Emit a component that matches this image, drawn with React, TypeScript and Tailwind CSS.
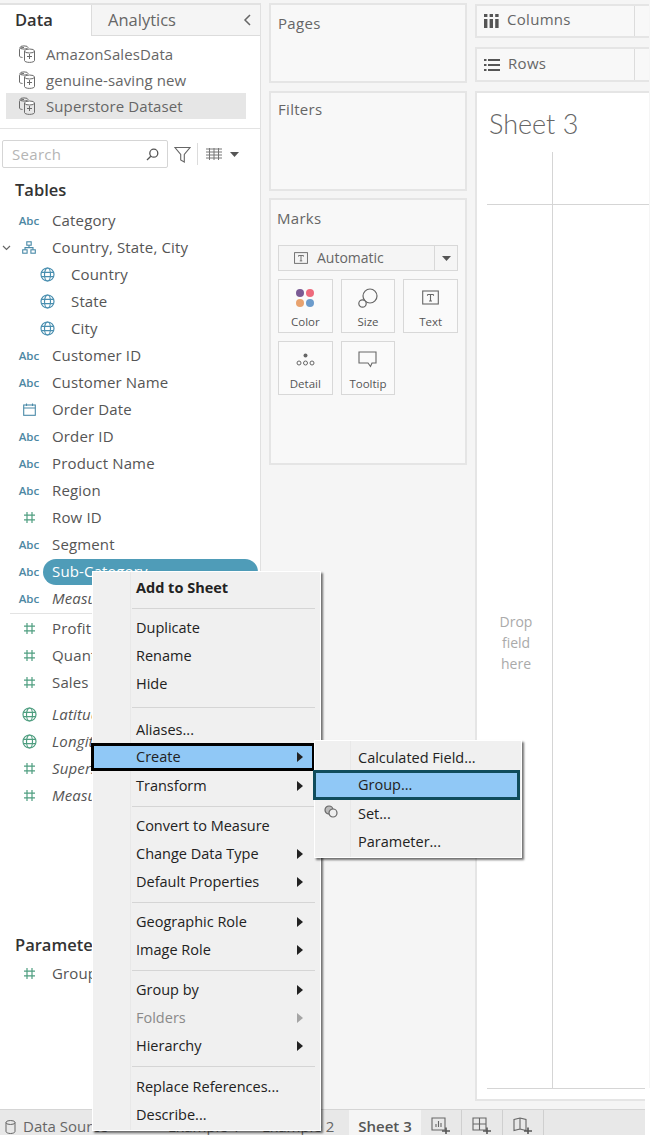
import type { ReactNode } from 'react';

const DataSourceIcon = () => (
  <svg width="18" height="20" viewBox="0 0 18 20" fill="none" stroke="#6b6b6b" strokeWidth="1">
    <path d="M6 3.5C3 3.5 1.5 4.3 1.5 5.2V12c0 .8 1 1.3 3 1.5" />
    <ellipse cx="6" cy="3.5" rx="4" ry="1.6" />
    <ellipse cx="11.5" cy="7" rx="5" ry="2" fill="#fff" />
    <path d="M6.5 7v9.5c0 1 2 1.9 5 1.9s5-.9 5-1.9V7" />
    <path d="M9 12.5h5M11.5 10v5" />
  </svg>
);

const Globe = ({ color = '#4a8fb0' }: { color?: string }) => (
  <svg width="15" height="15" viewBox="0 0 15 15" fill="none" stroke={color} strokeWidth="1.2">
    <circle cx="7.5" cy="7.5" r="6.5" />
    <ellipse cx="7.5" cy="7.5" rx="3" ry="6.5" />
    <path d="M1.2 5.3h12.6M1.2 9.7h12.6" />
  </svg>
);

const Hash = () => (
  <svg width="13" height="13" viewBox="0 0 13 13" stroke="#4f9e80" strokeWidth="1.2">
    <path d="M4 1v11M9 1v11M1 4.2h11M1 8.8h11" />
  </svg>
);

const Abc = () => <span className="text-[11.5px] font-semibold text-[#4d87a3]">Abc</span>;

const CalendarIcon = () => (
  <svg width="13" height="13" viewBox="0 0 13 13" fill="none" stroke="#4a8aa8" strokeWidth="1.1">
    <rect x="0.7" y="2" width="11.6" height="10.3" />
    <path d="M0.7 5h11.6M3.5 0.5v2.5M9.5 0.5v2.5" />
  </svg>
);

const HierarchyIcon = () => (
  <svg width="14" height="13" viewBox="0 0 14 13" fill="none" stroke="#4a8aa8" strokeWidth="1.1">
    <rect x="4.8" y="0.8" width="4.4" height="3.4" />
    <rect x="0.7" y="8.8" width="4.4" height="3.4" />
    <rect x="8.9" y="8.8" width="4.4" height="3.4" />
    <path d="M7 4.2v2.4M3 8.8V6.6h8v2.2" />
  </svg>
);

type Field = { name: string; icon: ReactNode; italic?: boolean };

const dimensions: Field[] = [
  { name: 'Customer ID', icon: <Abc /> },
  { name: 'Customer Name', icon: <Abc /> },
  { name: 'Order Date', icon: <CalendarIcon /> },
  { name: 'Order ID', icon: <Abc /> },
  { name: 'Product Name', icon: <Abc /> },
  { name: 'Region', icon: <Abc /> },
  { name: 'Row ID', icon: <Hash /> },
  { name: 'Segment', icon: <Abc /> },
];

const measures: Field[] = [
  { name: 'Profit', icon: <Hash /> },
  { name: 'Quantity', icon: <Hash /> },
  { name: 'Sales', icon: <Hash /> },
];

const generated: Field[] = [
  { name: 'Latitude (generated)', icon: <Globe color="#4f9e80" />, italic: true },
  { name: 'Longitude (generated)', icon: <Globe color="#4f9e80" />, italic: true },
  { name: 'Superstore Dataset (Count)', icon: <Hash />, italic: true },
  { name: 'Measure Values', icon: <Hash />, italic: true },
];

const FieldRow = ({ name, icon, italic }: Field) => (
  <div className="flex items-center h-[27px]">
    <div className="w-[52px] pl-[14px] pr-[8px] flex justify-center shrink-0">{icon}</div>
    <span className={`text-[15px] tracking-[0.15px] text-[#555] whitespace-nowrap ${italic ? 'italic' : ''}`}>{name}</span>
  </div>
);

const GeoRow = ({ name }: { name: string }) => (
  <div className="flex items-center h-[27px] pl-[40px]">
    <Globe />
    <span className="ml-[16px] text-[15px] tracking-[0.15px] text-[#555]">{name}</span>
  </div>
);

const LeftPanel = () => (
  <div className="w-[261px] shrink-0 bg-white border-r border-[#e0e0e0] border-t-2 border-t-[#e2e2e2] flex flex-col">
    <div className="flex h-[31px] shrink-0">
      <div className="w-[91px] pl-[15px] flex items-center text-[16.5px] font-semibold text-[#333]">Data</div>
      <div className="flex-1 flex items-center pl-[16px] bg-[#f5f5f5] border-l border-b border-[#dcdcdc] text-[16.5px] text-[#666] relative">
        Analytics
        <svg className="absolute right-[8px] top-[9px]" width="9" height="12" viewBox="0 0 9 12" fill="none" stroke="#666" strokeWidth="1.5">
          <path d="M7 1L2 6l5 5" />
        </svg>
      </div>
    </div>
    <div className="pt-[5px] pb-[9px] pr-[14px] pl-[6px] border-b border-[#e3e3e3]">
      {['AmazonSalesData', 'genuine-saving new', 'Superstore Dataset'].map((n, i) => (
        <div key={n} className={`flex items-center h-[26px] pl-[12px] gap-[10px] ${i === 2 ? 'bg-[#e6e6e6]' : ''}`}>
          <DataSourceIcon />
          <span className="text-[15px] tracking-[0.1px] text-[#666]">{n}</span>
        </div>
      ))}
    </div>
    <div className="flex items-center h-[28px] mt-[11px] pl-[2px] shrink-0">
      <div className="w-[166px] h-[28px] border border-[#d5d5d5] rounded-[2px] flex items-center justify-between pl-[9px] pr-[8px]">
        <span className="text-[15px] tracking-[0.3px] text-[#b5b5b5]">Search</span>
        <svg width="13" height="13" viewBox="0 0 13 13" fill="none" stroke="#555" strokeWidth="1.3">
          <circle cx="7.8" cy="5.2" r="4" />
          <path d="M4.8 8.2L1 12" />
        </svg>
      </div>
      <svg className="ml-[6px]" width="17" height="17" viewBox="0 0 17 17" fill="none" stroke="#666" strokeWidth="1.1">
        <path d="M1 1.5h15L10.3 8.5v7.5l-3.6-2V8.5z" />
      </svg>
      <div className="w-px h-[22px] bg-[#dcdcdc] ml-[6px]" />
      <svg className="ml-[8px]" width="16" height="12" viewBox="0 0 16 12" stroke="#777" strokeWidth="1" fill="none">
        <path d="M0 1h16M0 4h16M0 7h16M0 10h16M3.5 0v12M8 0v12M12.5 0v12" />
      </svg>
      <svg className="ml-[8px]" width="9" height="5" viewBox="0 0 9 5" fill="#555">
        <path d="M0 0h9L4.5 5z" />
      </svg>
    </div>
    <div className="h-[24px] mt-[10px] pl-[15px] flex items-center text-[16.5px] font-semibold text-[#333]">Tables</div>
    <div className="mt-[5px]">
      <FieldRow name="Category" icon={<Abc />} />
      <div className="relative">
        <svg className="absolute left-[2px] top-[11px]" width="9" height="6" viewBox="0 0 9 6" fill="none" stroke="#666" strokeWidth="1.2">
          <path d="M1 1l3.5 3.5L8 1" />
        </svg>
        <FieldRow name="Country, State, City" icon={<HierarchyIcon />} />
      </div>
      <GeoRow name="Country" />
      <GeoRow name="State" />
      <GeoRow name="City" />
      {dimensions.map((f) => (
        <FieldRow key={f.name} {...f} />
      ))}
      <div className="flex items-center h-[27px]">
        <div className="w-[52px] pl-[14px] pr-[8px] flex justify-center shrink-0">
          <Abc />
        </div>
        <div className="-ml-[9px] w-[215px] h-[26px] rounded-full bg-[#4f9cb8] text-white text-[15px] tracking-[0.15px] flex items-center pl-[9px]">Sub-Category</div>
      </div>
      <FieldRow name="Measure Names" icon={<Abc />} italic />
    </div>
    <div className="h-px bg-[#e3e3e3] ml-[10px] mr-[2px] my-[1px]" />
    <div>
      {measures.map((f) => (
        <FieldRow key={f.name} {...f} />
      ))}
      <div className="mt-[5px]">
        {generated.map((f) => (
          <FieldRow key={f.name} {...f} />
        ))}
      </div>
    </div>
    <div className="h-[24px] mt-[124px] pl-[15px] flex items-center text-[16.5px] font-semibold text-[#333]">Parameters</div>
    <div className="mt-[3px]">
      <FieldRow name="Group Parameter" icon={<Hash />} />
    </div>
  </div>
);

const MarkButton = ({ label, children }: { label: string; children: ReactNode }) => (
  <div className="h-[54px] border border-[#d8d8d8] bg-[#fafafa] flex flex-col items-center">
    <div className="h-[35px] flex items-center justify-center">{children}</div>
    <span className="text-[11.5px] text-[#555] leading-[14px]">{label}</span>
  </div>
);

const TextBoxIcon = ({ size = 17 }: { size?: number }) => (
  <svg width={size} height={size} viewBox="0 0 17 17" fill="none" stroke="#666" strokeWidth="1.1">
    <rect x="0.7" y="2" width="15.6" height="13" />
    <path d="M5.5 5.5h6M8.5 5.5v6.5M7 12h3M5.5 5.5v1.3M11.5 5.5v1.3" />
  </svg>
);

const MiddleColumn = () => (
  <div className="w-[198px] shrink-0 flex flex-col">
    <div className="h-[80px] border-2 border-[#e5e5e5] bg-[#f8f8f8] pl-[7px] pt-[7px] text-[15px] tracking-[0.3px] text-[#666]">Pages</div>
    <div className="h-[100px] mt-[8px] border-2 border-[#e5e5e5] bg-[#f8f8f8] pl-[7px] pt-[5px] text-[15px] tracking-[0.3px] text-[#666]">Filters</div>
    <div className="h-[267px] mt-[7px] border-2 border-[#e5e5e5] bg-[#f8f8f8] px-[7px] pt-[8px]">
      <div className="text-[15px] tracking-[0.3px] text-[#666] leading-[20px] -ml-px">Marks</div>
      <div className="flex h-[26px] mt-[17px] border border-[#d8d8d8] bg-[#f5f5f5]">
        <div className="flex-1 flex items-center pl-[15px] gap-[9px] text-[14px] text-[#666]">
          <TextBoxIcon size={14} />
          <span className="-mt-[2px]">Automatic</span>
        </div>
        <div className="w-[23px] border-l border-[#d8d8d8] flex items-center justify-center">
          <svg width="9" height="5" viewBox="0 0 9 5" fill="#555">
            <path d="M0 0h9L4.5 5z" />
          </svg>
        </div>
      </div>
      <div className="grid grid-cols-3 gap-[8px] mt-[8px]">
        <MarkButton label="Color">
          <svg width="20" height="20" viewBox="0 0 20 20">
            <circle cx="5" cy="5" r="4" fill="#7a5a94" />
            <circle cx="15" cy="5" r="4" fill="#ee6a7c" />
            <circle cx="5" cy="15" r="4" fill="#e8a26e" />
            <circle cx="15" cy="15" r="4" fill="#6c9bcb" />
          </svg>
        </MarkButton>
        <MarkButton label="Size">
          <svg width="20" height="20" viewBox="0 0 20 20" fill="none" stroke="#666" strokeWidth="1.2">
            <circle cx="12" cy="8" r="7" />
            <circle cx="4.5" cy="15.5" r="3.7" fill="#fafafa" />
          </svg>
        </MarkButton>
        <MarkButton label="Text">
          <TextBoxIcon />
        </MarkButton>
        <MarkButton label="Detail">
          <svg width="19" height="14" viewBox="0 0 19 14" fill="none" stroke="#666">
            <circle cx="9.5" cy="2.5" r="2" fill="#666" stroke="none" />
            <circle cx="3" cy="10" r="2" />
            <circle cx="9.5" cy="10" r="2" />
            <circle cx="16" cy="10" r="2" />
          </svg>
        </MarkButton>
        <MarkButton label="Tooltip">
          <svg width="19" height="17" viewBox="0 0 19 17" fill="none" stroke="#666" strokeWidth="1.1">
            <path d="M1 1h17v11h-4l-1.5 3.5L10 12H1z" />
          </svg>
        </MarkButton>
      </div>
    </div>
  </div>
);

const Shelf = ({ label, icon, className }: { label: string; icon: ReactNode; className?: string }) => (
  <div className={`w-full shrink-0 border-2 border-r-0 border-[#e5e5e5] bg-[#f8f8f8] flex ${className ?? ''}`}>
    <div className="w-[158px] border-r border-[#dcdcdc] flex items-center pl-[7px] gap-[8px] text-[15px] tracking-[0.3px] text-[#666]">
      {icon}
      <span className="-mt-[3px]">{label}</span>
    </div>
  </div>
);

const SheetArea = () => (
  <div className="flex-1 flex flex-col min-w-0">
    <Shelf
      label="Columns"
      className="mt-px h-[34px]"
      icon={
        <svg width="15" height="14" viewBox="0 0 15 14" fill="#555">
          <rect x="0" y="5" width="3.4" height="9" />
          <rect x="5.6" y="5" width="3.4" height="9" />
          <rect x="11.2" y="5" width="3.4" height="9" />
          <rect x="0" y="0" width="3.4" height="3" />
          <rect x="5.6" y="0" width="3.4" height="3" />
          <rect x="11.2" y="0" width="3.4" height="3" />
        </svg>
      }
    />
    <Shelf
      label="Rows"
      className="mt-[9px] h-[35px]"
      icon={
        <svg width="16" height="12" viewBox="0 0 16 12" fill="#555">
          <rect x="0" y="0" width="2.5" height="2" />
          <rect x="4" y="0" width="12" height="2" />
          <rect x="0" y="5" width="2.5" height="2" />
          <rect x="4" y="5" width="12" height="2" />
          <rect x="0" y="10" width="2.5" height="2" />
          <rect x="4" y="10" width="12" height="2" />
        </svg>
      }
    />
    <div className="h-[1010px] w-full mt-[9px] border-2 border-r-0 border-[#e5e5e5] bg-white pl-[10px] flex flex-col">
      <div className="h-[59px] shrink-0 pt-[15px] pl-[2px] text-[27px] leading-[32px] text-[#666] font-light font-['Lato',sans-serif]">Sheet 3</div>
      <div className="h-[937px] grid grid-cols-[66px_1fr] grid-rows-[53px_1fr] border-b border-[#d5d5d5]">
        <div className="border-r border-b border-[#d5d5d5]" />
        <div className="border-b border-[#d5d5d5]" />
        <div className="border-r border-[#d5d5d5] pt-[406px] text-center text-[14px] leading-[21px] text-[#aaa] pr-[7px]">
          Drop
          <br />
          field
          <br />
          here
        </div>
        <div />
      </div>
    </div>
  </div>
);

const AddIcon = ({ children }: { children: ReactNode }) => (
  <svg width="20" height="17" viewBox="0 0 20 17" fill="none" stroke="#666" strokeWidth="1.1">
    {children}
    <path d="M11 14h8M15 10.5v6.5" strokeWidth="1.6" stroke="#555" />
  </svg>
);

const TabBar = () => (
  <div className="h-[26px] w-[645px] shrink-0 bg-[#e8e8e8] border-t border-[#d5d5d5] flex text-[15px] text-[#666] leading-[17px]">
    <div className="w-[168px] pl-[5px] pt-[8px] flex items-center gap-[7px] whitespace-nowrap">
      <svg width="11" height="14" viewBox="0 0 11 14" fill="none" stroke="#666">
        <ellipse cx="5.5" cy="2.5" rx="4.5" ry="2" />
        <path d="M1 2.5v9c0 1 2 2 4.5 2s4.5-1 4.5-2v-9" />
      </svg>
      Data Source
    </div>
    <div className="w-[94px] pt-[8px] flex items-center whitespace-nowrap">Example 1</div>
    <div className="w-[87px] pt-[8px] flex items-center whitespace-nowrap">Example 2</div>
    <div className="w-[72px] pt-[8px] bg-[#f5f5f5] flex items-center justify-center font-semibold text-[#555]">Sheet 3</div>
    <div className="w-[41px] pt-[6px] border-r border-[#cfcfcf] flex items-center justify-center">
      <AddIcon>
        <path d="M1 1h13v12H1z" />
        <path d="M5 10V7M7.5 10V4M10 10V6" />
      </AddIcon>
    </div>
    <div className="w-[41px] pt-[6px] border-r border-[#cfcfcf] flex items-center justify-center">
      <AddIcon>
        <path d="M1 1h13v12H1zM7.5 1v12M1 7h13" />
      </AddIcon>
    </div>
    <div className="w-[41px] pt-[6px] border-r border-[#cfcfcf] flex items-center justify-center">
      <AddIcon>
        <path d="M1 2.5l6 -1.5 6 1.5v11l-6-1.5-6 1.5zM7 1v11" />
      </AddIcon>
    </div>
  </div>
);

const Item = ({ label, arrow, bold, disabled, hot }: { label: string; arrow?: boolean; bold?: boolean; disabled?: boolean; hot?: boolean }) => {
  if (hot) {
    return (
      <div className="relative -ml-[2px] -mt-px mb-px w-[224px] h-[28px] border-[3px] border-black bg-[#90c8f6] flex items-center pl-[42px] text-[14.5px] text-[#222]">
        {label}
        <svg className="absolute right-[9px] top-[6px]" width="6" height="10" viewBox="0 0 6 10" fill="#222">
          <path d="M0 0l6 5-6 5z" />
        </svg>
      </div>
    );
  }
  return (
    <div className={`relative h-[28px] flex items-center pl-[43px] text-[14.5px] ${bold ? 'font-bold text-[#222]' : disabled ? 'text-[#8a8a8a]' : 'text-[#222]'}`}>
      {label}
      {arrow && (
        <svg className="absolute right-[17px] top-[9px]" width="6" height="10" viewBox="0 0 6 10" fill={disabled ? '#a5a5a5' : '#222'}>
          <path d="M0 0l6 5-6 5z" />
        </svg>
      )}
    </div>
  );
};

const Sep = ({ h = 12 }: { h?: number }) => (
  <div className="flex items-center pl-[39px] pr-[5px]" style={{ height: h }}>
    <div className="h-px w-full bg-[#d5d5d5]" />
  </div>
);

const ContextMenu = () => (
  <div className="absolute left-[92px] top-[571px] w-[229px] h-[560px] bg-[#f0f0f0] border border-white pt-[2px] shadow-[2px_2px_2px_rgba(0,0,0,0.55)]">
    <div className="absolute left-[37px] top-0 bottom-0 w-px bg-[#e8e8e8]" />
    <Item label="Add to Sheet" bold />
    <Sep />
    <Item label="Duplicate" />
    <Item label="Rename" />
    <Item label="Hide" />
    <Sep h={18} />
    <Item label="Aliases..." />
    <Item label="Create" arrow hot />
    <Item label="Transform" arrow />
    <Sep />
    <Item label="Convert to Measure" />
    <Item label="Change Data Type" arrow />
    <Item label="Default Properties" arrow />
    <Sep />
    <Item label="Geographic Role" arrow />
    <Item label="Image Role" arrow />
    <Sep />
    <Item label="Group by" arrow />
    <Item label="Folders" arrow disabled />
    <Item label="Hierarchy" arrow />
    <Sep h={13} />
    <Item label="Replace References..." />
    <Item label="Describe..." />
  </div>
);

const SubItem = ({ label, hot, icon }: { label: string; hot?: boolean; icon?: ReactNode }) =>
  hot ? (
    <div className="relative -ml-[2px] -mt-[2px] w-[207px] h-[30px] border-[3px] border-[#0f4c5c] bg-[#90c8f6] flex items-center pl-[42px] text-[14.5px] text-[#222]">{label}</div>
  ) : (
    <div className="relative h-[28px] flex items-center pl-[43px] text-[14.5px] text-[#222]">
      {icon}
      {label}
    </div>
  );

const SubMenu = () => (
  <div className="absolute left-[314px] top-[740px] w-[208px] h-[118px] bg-[#f0f0f0] border border-white pt-[3px] shadow-[2px_2px_2px_rgba(0,0,0,0.55)]">
    <div className="absolute left-[35px] top-0 bottom-0 w-px bg-[#e8e8e8]" />
    <SubItem label="Calculated Field..." />
    <SubItem label="Group..." hot />
    <SubItem
      label="Set..."
      icon={
        <svg className="absolute left-[9px] top-[5px]" width="14" height="14" viewBox="0 0 14 14" fill="none" stroke="#666" strokeWidth="1.2">
          <circle cx="5" cy="5" r="4" fill="#bbb" />
          <circle cx="9" cy="8" r="4" fill="#eee" />
        </svg>
      }
    />
    <SubItem label="Parameter..." />
  </div>
);

export default function App() {
  return (
    <div className={`relative w-[650px] h-[1135px] overflow-hidden bg-white flex flex-col font-["Open_Sans",sans-serif]`}>
      <div className="flex-1 flex gap-[8px] pt-[3px] pr-px min-h-0 bg-[#f5f5f5]">
        <LeftPanel />
        <MiddleColumn />
        <SheetArea />
      </div>
      <TabBar />
      {/* the capture is cut 5px short along the bottom right corner */}
      <div className="absolute left-[645px] top-[1088px] w-[5px] h-[47px] bg-white" />
      <ContextMenu />
      <SubMenu />
    </div>
  );
}
